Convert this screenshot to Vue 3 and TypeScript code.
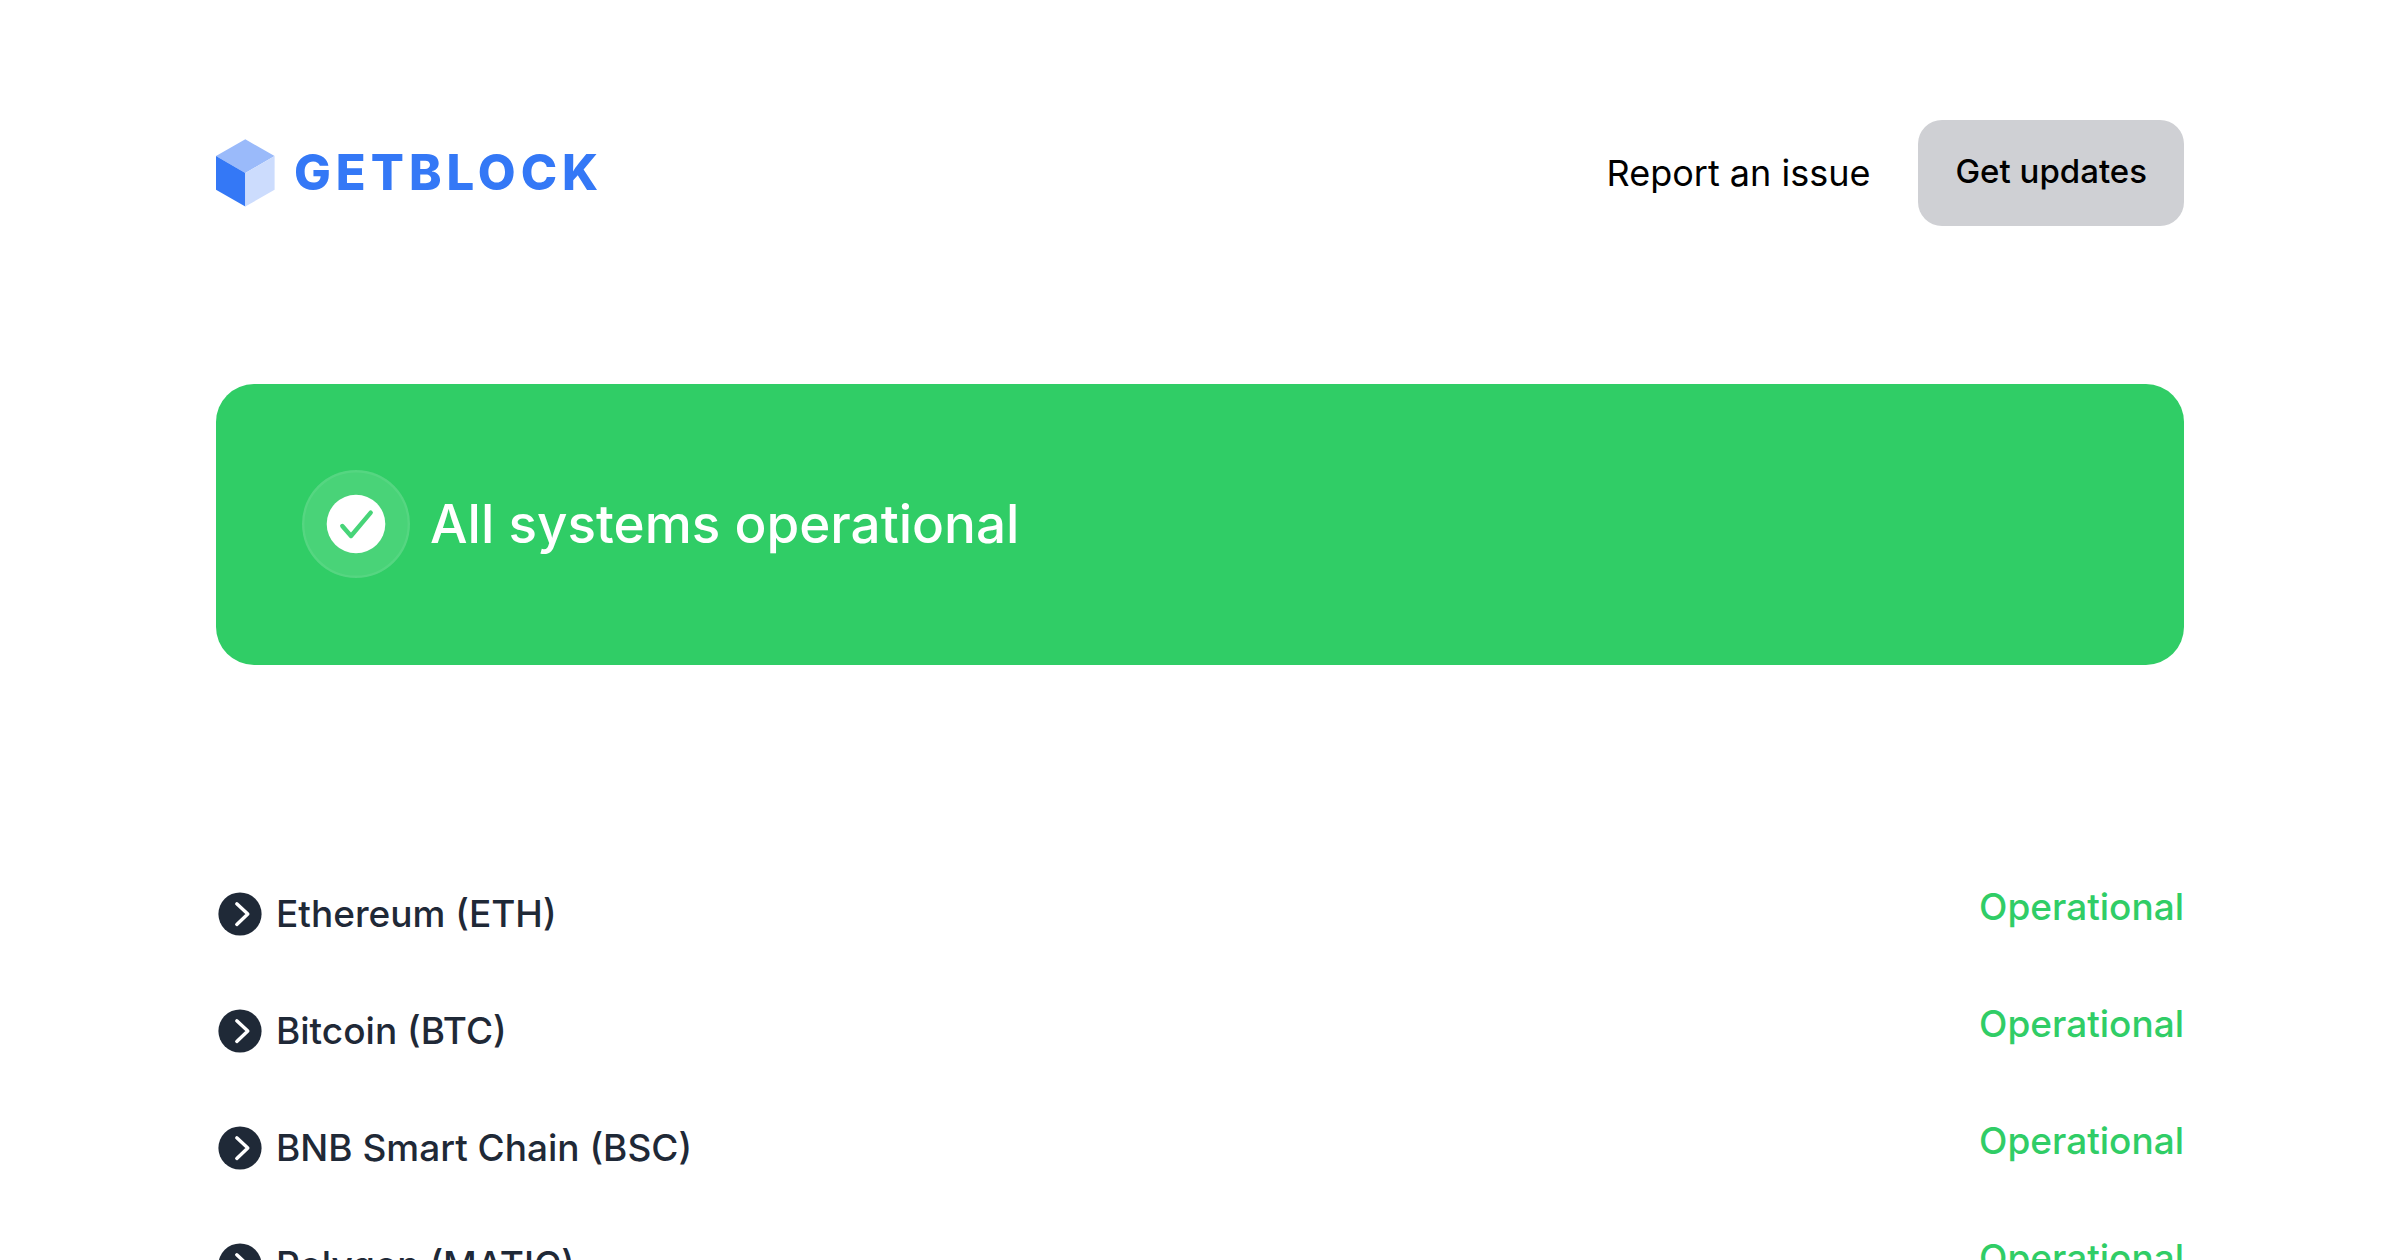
<script setup lang="ts">
import { ref } from 'vue'

interface Service {
  name: string
  status: string
}

const services = ref<Service[]>([
  { name: 'Ethereum (ETH)', status: 'Operational' },
  { name: 'Bitcoin (BTC)', status: 'Operational' },
  { name: 'BNB Smart Chain (BSC)', status: 'Operational' },
  { name: 'Polygon (MATIC)', status: 'Operational' },
])
</script>

<template>
  <div class="page">
    <header class="header">
      <a class="logo" href="#">
        <svg class="cube" viewBox="0 0 60 68" aria-hidden="true">
          <path d="M29.3 0.3 58.6 17 29.3 34 0 17Z" fill="#9abafa" />
          <path d="M0 17 29.3 34V67.5L0 50.8Z" fill="#3478f6" />
          <path d="M58.6 17 29.3 34V67.5L58.6 50.8Z" fill="#ccdcfd" />
        </svg>
        <span class="wordmark">GETBLOCK</span>
      </a>
      <nav class="actions">
        <a class="report" href="#">Report an issue</a>
        <button class="updates" type="button">Get updates</button>
      </nav>
    </header>

    <main>
      <section class="banner">
        <svg class="check" viewBox="0 0 108 108" aria-hidden="true">
          <circle cx="54" cy="54" r="54" fill="#fff" fill-opacity="0.12" />
          <circle cx="54" cy="54" r="52.8" fill="none" stroke="#fff" stroke-opacity="0.07" stroke-width="2.4" />
          <circle cx="54" cy="54" r="29.3" fill="#fff" />
          <path d="M40.3 56 49 66 68.7 42.7" fill="none" stroke="#47d478" stroke-width="4.4" stroke-linecap="round" stroke-linejoin="round" />
        </svg>
        <h1 class="headline">All systems operational</h1>
      </section>

      <ul class="services">
        <li v-for="service in services" :key="service.name" class="service">
          <button class="toggle" type="button" aria-expanded="false">
            <svg class="chevron" viewBox="0 0 48 48" aria-hidden="true">
              <circle cx="24" cy="24" r="21.6" fill="#1f2937" />
              <path d="M20.8 13.8 31.8 24 20.8 34.4" fill="none" stroke="#fff" stroke-width="3.4" stroke-linecap="round" stroke-linejoin="round" />
            </svg>
            <span>{{ service.name }}</span>
          </button>
          <span class="status">{{ service.status }}</span>
        </li>
      </ul>
    </main>
  </div>
</template>

<style>
body {
  margin: 0;
  background: #fff;
}
</style>

<style scoped>
.page {
  box-sizing: border-box;
  height: 100vh;
  overflow: hidden;
  padding: 120px 9% 0;
  font-family: Inter, 'Liberation Sans', sans-serif;
  color: #000;
}

.header {
  display: flex;
  align-items: center;
  justify-content: space-between;
}

.logo {
  display: flex;
  align-items: center;
  gap: 18px;
  text-decoration: none;
}

.cube {
  width: 60px;
  height: 68px;
}

.wordmark {
  font-size: 49px;
  line-height: 56px;
  font-weight: 800;
  letter-spacing: 5px;
  color: #3478f6;
}

.actions {
  display: flex;
  align-items: center;
  gap: 48px;
}

.report {
  font-size: 36px;
  line-height: 56px;
  color: inherit;
  text-decoration: none;
}

.updates {
  height: 106px;
  padding: 0 37px 4px;
  border: 0;
  border-radius: 24px;
  background: #cfd0d4;
  color: #000;
  font-family: inherit;
  font-size: 33px;
  line-height: 56px;
  font-weight: 500;
}

.banner {
  display: flex;
  align-items: center;
  gap: 20px;
  margin-top: 158px;
  padding: 86px 86px 87px;
  border-radius: 38px;
  background: #30cd66;
}

.check {
  flex: none;
  width: 108px;
  height: 108px;
}

.headline {
  margin: 0;
  font-size: 53px;
  line-height: 70px;
  font-weight: 500;
  color: #fff;
}

.services {
  display: flex;
  flex-direction: column;
  gap: 47px;
  margin: 214px 0 0;
  padding: 0;
  list-style: none;
}

.service {
  display: flex;
  align-items: flex-start;
  justify-content: space-between;
}

.toggle {
  display: flex;
  align-items: center;
  gap: 12px;
  padding: 0;
  border: 0;
  background: none;
  color: #1f2937;
  font-family: inherit;
  font-size: 37px;
  line-height: 70px;
  font-weight: 500;
}

.chevron {
  width: 48px;
  height: 48px;
}

.status {
  font-size: 37px;
  line-height: 56px;
  font-weight: 500;
  color: #30cd66;
}
</style>
